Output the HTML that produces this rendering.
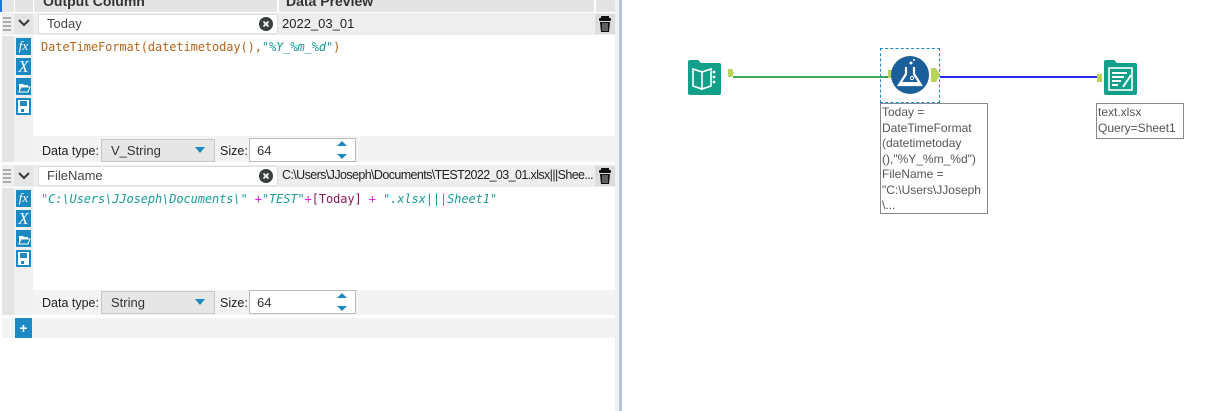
<!DOCTYPE html>
<html><head><meta charset="utf-8"><style>
*{margin:0;padding:0;box-sizing:border-box}
body{width:1205px;height:411px;background:#fff;position:relative;overflow:hidden;font-family:"Liberation Sans",sans-serif;font-size:12px;color:#222}
.a{position:absolute}
.mono{font-family:"DejaVu Sans Mono","Liberation Mono",monospace;font-size:12px;letter-spacing:-0.1px}
.btn{position:absolute;left:16px;width:15px;height:17px;background:#1b8ac4;color:#fff}
.grip{position:absolute;left:3px;width:8px;height:2px;background:#aaa}
.lbl{font-size:12.5px;color:#222}
.cap{font-family:"Liberation Sans",sans-serif;font-size:12px;color:#555;line-height:15.5px;white-space:nowrap}
</style></head><body>
<div class="a" style="left:0;top:0;width:2px;height:12px;background:#1a73e8"></div>
<div class="a" style="left:2px;top:0;width:613px;height:12px;background:#e4e4e4"></div>
<div class="a" style="left:14px;top:0;width:1px;height:12px;background:#fff"></div>
<div class="a" style="left:33px;top:0;width:1px;height:12px;background:#fff"></div>
<div class="a" style="left:277px;top:0;width:2px;height:12px;background:#fff"></div>
<div class="a" style="left:594px;top:0;width:2px;height:12px;background:#fff"></div>
<div class="a" style="left:43px;top:-7px;font-weight:bold;font-size:14px;color:#333">Output Column</div>
<div class="a" style="left:286px;top:-7px;font-weight:bold;font-size:14px;color:#333">Data Preview</div>

<!-- ROW 1 -->
<div class="a" style="left:2px;top:13px;width:613px;height:22px;background:#eeeeee"></div>
<div class="grip" style="top:17px"></div><div class="grip" style="top:21px"></div><div class="grip" style="top:25px"></div><div class="grip" style="top:29px"></div>
<div class="a" style="left:14px;top:14px;width:19px;height:20px;background:#e4e4e4"></div>
<svg class="a" style="left:18px;top:19px" width="12" height="8"><path d="M1 1 L6 6 L11 1" stroke="#333" stroke-width="2" fill="none"/></svg>
<div class="a" style="left:38px;top:14px;width:240px;height:20px;background:#fff;border:1px solid #ddd"></div>
<div class="a" style="left:47px;top:16px;font-size:13px;color:#444">Today</div>
<svg class="a" style="left:259px;top:17px" width="14" height="14"><circle cx="7" cy="7" r="7" fill="#3a3f3f"/><path d="M4.5 4.5L9.5 9.5M9.5 4.5L4.5 9.5" stroke="#fff" stroke-width="1.8"/></svg>
<div class="a" style="left:282px;top:16px;font-size:13px;color:#222">2022_03_01</div>
<div class="a" style="left:595px;top:14px;width:20px;height:20px;background:#dcdcdc"></div>
<svg class="a" style="left:598px;top:15px" width="14" height="18"><rect x="3" y="1" width="8" height="2" fill="#111"/><rect x="1" y="3" width="12" height="3" rx="1" fill="#111"/><path d="M2 7h10l-1 10H3z" fill="#111"/><path d="M5 8v8M7 8v8M9 8v8" stroke="#ddd" stroke-width="0.8"/></svg>

<div class="a" style="left:2px;top:36px;width:12px;height:126px;background:#e4e4e4"></div>
<div class="a" style="left:14px;top:36px;width:19px;height:126px;background:#f0f0f0"></div>
<div class="btn" style="top:38px;font-family:'Liberation Serif',serif;font-style:italic;font-size:13px;line-height:16px;text-align:center">fx</div>
<div class="btn" style="top:58px;font-family:'Liberation Serif',serif;font-style:italic;font-size:17px;line-height:17px;text-align:center">X</div>
<div class="btn" style="top:78px"><svg width="15" height="17"><path d="M3 6h4l1 1h4v7H3z" fill="#fff"/><path d="M5 9h9l-2 5H3z" fill="#1b8ac4" stroke="#fff"/></svg></div>
<div class="btn" style="top:98px"><svg width="15" height="17"><rect x="2" y="2" width="11" height="13" fill="#fff"/><rect x="4" y="3" width="7" height="5" fill="#1b8ac4"/><rect x="5" y="11" width="3" height="3" fill="#1b8ac4"/></svg></div>
<div class="a" style="left:33px;top:36px;width:582px;height:100px;background:#fff"></div>
<div class="a mono" style="left:41px;top:40px;color:#b5651d">DateTimeFormat(datetimetoday(),<span style="color:#1a9a9a;font-style:italic">"%Y_%m_%d"</span>)</div>
<div class="a" style="left:33px;top:136px;width:582px;height:26px;background:#f3f3f3"></div>
<div class="a lbl" style="left:42px;top:144px">Data type:</div>
<div class="a" style="left:101px;top:139px;width:114px;height:23px;background:#e6e6e6;border:1px solid #c8c8c8"></div>
<div class="a" style="left:111px;top:143px;font-size:13px;color:#333">V_String</div>
<svg class="a" style="left:195px;top:147px" width="10" height="6"><path d="M0 0h10L5 6z" fill="#1b8ac4"/></svg>
<div class="a lbl" style="left:220px;top:144px">Size:</div>
<div class="a" style="left:249px;top:138px;width:107px;height:24px;background:#fff;border:1px solid #bbb"></div>
<div class="a" style="left:257px;top:143px;font-size:13px;color:#333">64</div>
<svg class="a" style="left:328px;top:139px" width="28" height="22"><path d="M9 7h10l-5-5z" fill="#1b8ac4"/><path d="M9 15h10l-5 5z" fill="#1b8ac4"/></svg>

<!-- ROW 2 -->
<div class="a" style="left:2px;top:165px;width:613px;height:22px;background:#eeeeee"></div>
<div class="grip" style="top:169px"></div><div class="grip" style="top:173px"></div><div class="grip" style="top:177px"></div><div class="grip" style="top:181px"></div>
<div class="a" style="left:14px;top:166px;width:19px;height:20px;background:#e4e4e4"></div>
<svg class="a" style="left:18px;top:172px" width="12" height="8"><path d="M1 1 L6 6 L11 1" stroke="#333" stroke-width="2" fill="none"/></svg>
<div class="a" style="left:38px;top:166px;width:240px;height:20px;background:#fff;border:1px solid #ddd"></div>
<div class="a" style="left:47px;top:168px;font-size:13px;color:#444">FileName</div>
<svg class="a" style="left:259px;top:169px" width="14" height="14"><circle cx="7" cy="7" r="7" fill="#3a3f3f"/><path d="M4.5 4.5L9.5 9.5M9.5 4.5L4.5 9.5" stroke="#fff" stroke-width="1.8"/></svg>
<div class="a" style="left:282px;top:168px;width:311px;overflow:hidden;font-size:12.5px;color:#222;white-space:nowrap;letter-spacing:-0.6px">C:\Users\JJoseph\Documents\TEST2022_03_01.xlsx|||Shee...</div>
<div class="a" style="left:595px;top:166px;width:20px;height:20px;background:#dcdcdc"></div>
<svg class="a" style="left:598px;top:167px" width="14" height="18"><rect x="3" y="1" width="8" height="2" fill="#111"/><rect x="1" y="3" width="12" height="3" rx="1" fill="#111"/><path d="M2 7h10l-1 10H3z" fill="#111"/><path d="M5 8v8M7 8v8M9 8v8" stroke="#ddd" stroke-width="0.8"/></svg>

<div class="a" style="left:2px;top:188px;width:12px;height:127px;background:#e4e4e4"></div>
<div class="a" style="left:14px;top:188px;width:19px;height:127px;background:#f0f0f0"></div>
<div class="btn" style="top:190px;font-family:'Liberation Serif',serif;font-style:italic;font-size:13px;line-height:16px;text-align:center">fx</div>
<div class="btn" style="top:210px;font-family:'Liberation Serif',serif;font-style:italic;font-size:17px;line-height:17px;text-align:center">X</div>
<div class="btn" style="top:230px"><svg width="15" height="17"><path d="M3 6h4l1 1h4v7H3z" fill="#fff"/><path d="M5 9h9l-2 5H3z" fill="#1b8ac4" stroke="#fff"/></svg></div>
<div class="btn" style="top:250px"><svg width="15" height="17"><rect x="2" y="2" width="11" height="13" fill="#fff"/><rect x="4" y="3" width="7" height="5" fill="#1b8ac4"/><rect x="5" y="11" width="3" height="3" fill="#1b8ac4"/></svg></div>
<div class="a" style="left:33px;top:188px;width:582px;height:102px;background:#fff"></div>
<div class="a mono" style="left:41px;top:192px;color:#1a9a9a;font-style:italic;white-space:nowrap">"C:\Users\JJoseph\Documents\" <span style="color:#e020e0;font-style:normal">+</span>"TEST"<span style="color:#e020e0;font-style:normal">+</span><span style="color:#8b1a5a;font-style:normal">[Today]</span> <span style="color:#e020e0;font-style:normal">+</span> ".xlsx|||Sheet1"</div>
<div class="a" style="left:33px;top:290px;width:582px;height:25px;background:#f3f3f3"></div>
<div class="a lbl" style="left:42px;top:296px">Data type:</div>
<div class="a" style="left:101px;top:291px;width:114px;height:23px;background:#e6e6e6;border:1px solid #c8c8c8"></div>
<div class="a" style="left:111px;top:295px;font-size:13px;color:#333">String</div>
<svg class="a" style="left:195px;top:299px" width="10" height="6"><path d="M0 0h10L5 6z" fill="#1b8ac4"/></svg>
<div class="a lbl" style="left:220px;top:296px">Size:</div>
<div class="a" style="left:249px;top:290px;width:107px;height:24px;background:#fff;border:1px solid #bbb"></div>
<div class="a" style="left:257px;top:295px;font-size:13px;color:#333">64</div>
<svg class="a" style="left:328px;top:291px" width="28" height="22"><path d="M9 7h10l-5-5z" fill="#1b8ac4"/><path d="M9 15h10l-5 5z" fill="#1b8ac4"/></svg>

<div class="a" style="left:2px;top:318px;width:613px;height:20px;background:#f3f3f3"></div>
<div class="a" style="left:15px;top:318px;width:17px;height:20px;background:#1b8ac4;color:#fff;font-weight:bold;font-size:14px;line-height:20px;text-align:center">+</div>

<div class="a" style="left:615px;top:0;width:4px;height:411px;background:#f0f0f0"></div>
<div class="a" style="left:619px;top:0;width:3px;height:411px;background:#b6c3e2"></div>

<div class="a" style="left:733px;top:76px;width:156px;height:2px;background:#3aaa5a"></div>
<div class="a" style="left:940px;top:76px;width:157px;height:2px;background:#2a2ae8"></div>
<svg class="a" style="left:687px;top:59px" width="50" height="38">
<path d="M1 3a2 2 0 0 1 2-2h8l3 3h18a2 2 0 0 1 2 2v28a2 2 0 0 1-2 2H3a2 2 0 0 1-2-2z" fill="#13a08a"/>
<path d="M6 10l9 3v17l-9-3zM24 10l-9 3v17l9-3z" fill="none" stroke="#fff" stroke-width="1.6"/>
<circle cx="27" cy="13" r="1.4" fill="#fff"/><circle cx="27" cy="18" r="1.4" fill="#fff"/><circle cx="27" cy="23" r="1.4" fill="#fff"/>
<path d="M41 10h4l2 4-2 4h-4z" fill="#b8d45a"/>
</svg>
<div class="a" style="left:880px;top:48px;width:60px;height:55px;border:1px dashed #1b8ac4"></div>
<svg class="a" style="left:880px;top:55px" width="62" height="44">
<path d="M8 15h5v8H8z" fill="#b8d45a"/>
<circle cx="30" cy="20" r="19" fill="#1a5e9a"/>
<path d="M26 12v7l-7 11h22l-7-11v-7" fill="none" stroke="#fff" stroke-width="2.2"/>
<path d="M21 27h18l2 3H19z" fill="#fff"/>
<circle cx="31" cy="8" r="1.5" fill="#fff"/><circle cx="34" cy="5" r="1" fill="#fff"/><circle cx="32" cy="23" r="1.6" fill="none" stroke="#fff"/>
<path d="M51 13h5l4 7-4 7h-5z" fill="#b8d45a"/>
</svg>
<div class="a cap" style="left:880px;top:103px;width:108px;height:111px;border:1px solid #888;padding:1px 1px">Today =<br>DateTimeFormat<br>(datetimetoday<br>(),"%Y_%m_%d")<br>FileName =<br>"C:\Users\JJoseph<br>\...</div>
<svg class="a" style="left:1093px;top:59px" width="54" height="38">
<path d="M4 15h5v8H4z" fill="#b8d45a"/>
<path d="M11 3a2 2 0 0 1 2-2h8l3 3h18a2 2 0 0 1 2 2v28a2 2 0 0 1-2 2H13a2 2 0 0 1-2-2z" fill="#13a08a"/>
<rect x="16" y="9" width="23" height="22" fill="none" stroke="#fff" stroke-width="1.6"/>
<path d="M19 14h15M19 18h12M19 22h9M19 26h6" stroke="#fff" stroke-width="2"/>
<path d="M30 28l8-12" stroke="#fff" stroke-width="2"/>
</svg>
<div class="a cap" style="left:1096px;top:103px;width:88px;height:36px;border:1px solid #888;padding:1px 1px">text.xlsx<br>Query=Sheet1</div>
</body></html>
